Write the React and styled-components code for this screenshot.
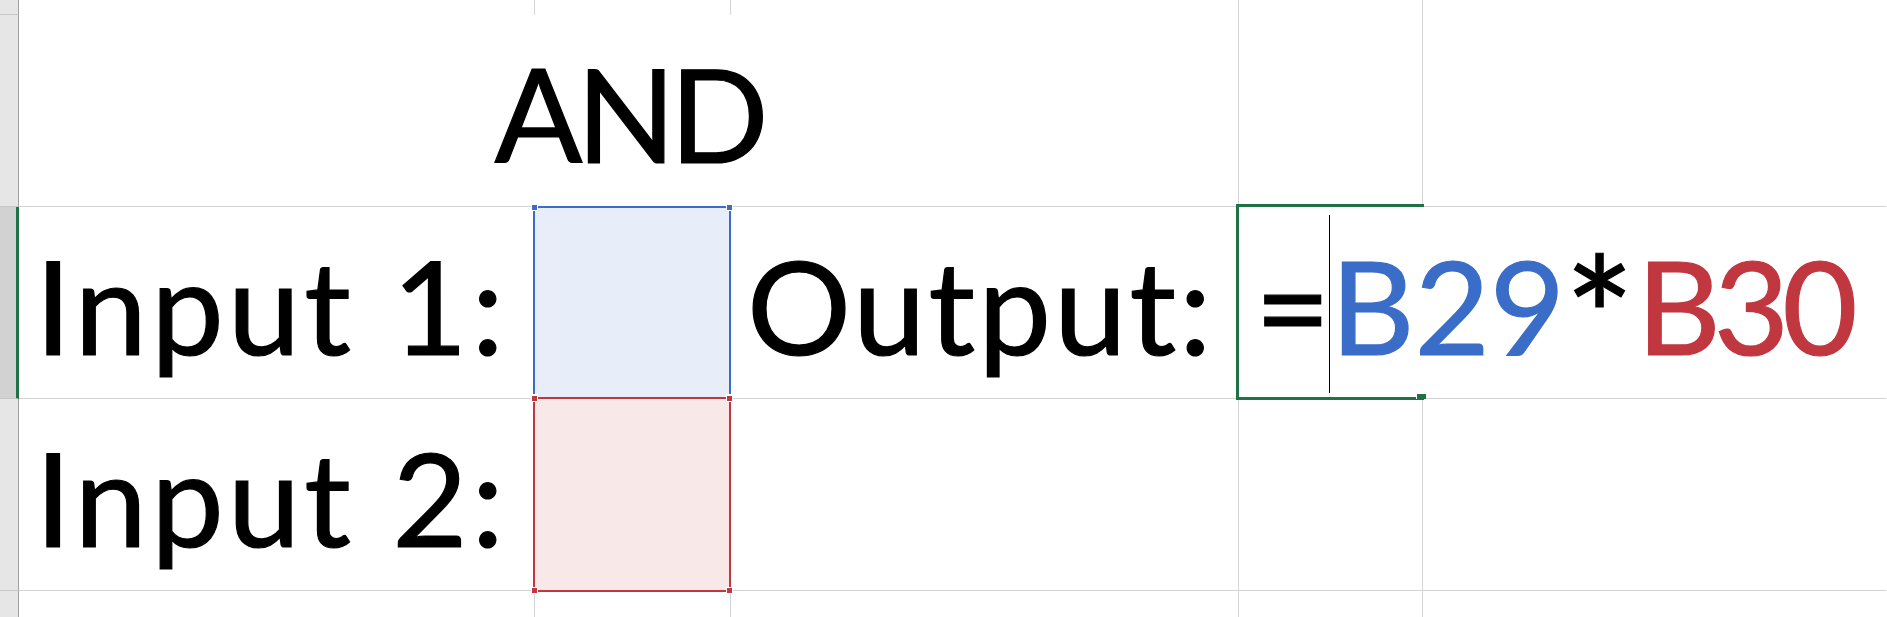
import React from "react";
import styled, { createGlobalStyle, css } from "styled-components";

const C = {
  grid: "#D4D4D4",
  header: "#E6E6E6",
  headerActive: "#D2D2D2",
  headerEdge: "#A0A0A0",
  headerSep: "#C8C8C8",
  green: "#1F7246",
  blue: "#3A6DC8",
  blueFill: "#E8EEF9",
  red: "#C1373F",
  redFill: "#F8E8E8",
};

const GlobalStyle = createGlobalStyle`
  html, body { margin: 0; padding: 0; background: #ffffff; }
  body {
    font-family: Lato, "Noto Sans", "Liberation Sans", sans-serif;
    overflow: hidden;
  }
`;

const Sheet = styled.div`
  display: grid;
  grid-template-columns: 19px 516px 196px 508px 184px 1fr;
  grid-template-rows: 15px repeat(3, 192px) 1fr;
  width: 1887px;
  height: 617px;
  overflow: hidden;
  background: #fff;
`;

const RowHeader = styled.div`
  box-sizing: border-box;
  background: ${(p) => (p.$active ? C.headerActive : C.header)};
  border-right: ${(p) =>
    p.$active ? `3px solid ${C.green}` : `1px solid ${C.headerEdge}`};
  border-bottom: 1px solid ${C.headerSep};
`;

const Cell = styled.div`
  box-sizing: border-box;
  grid-column: span ${(p) => p.$span || 1};
  position: relative;
  display: flex;
  align-items: flex-end;
  justify-content: ${(p) => (p.$center ? "center" : "flex-start")};
  padding: 0 0 28px ${(p) => (p.$center ? 0 : 16)}px;
  min-width: 0;
  background: ${(p) => p.$fill || "#fff"};
  border-right: 1px solid ${(p) => (p.$open || p.$last ? "transparent" : C.grid)};
  border-bottom: 1px solid ${C.grid};
  ${(p) =>
    p.$open &&
    css`
      z-index: 2;
    `}
`;

const Label = styled.span`
  font-size: 130px;
  line-height: 130px;
  white-space: nowrap;
  color: #000;
  letter-spacing: ${(p) => p.$spacing || 0}px;
  -webkit-text-stroke: 1.2px currentColor;
`;

const Ref = styled.span`
  color: ${(p) => p.$color};
  letter-spacing: ${(p) => p.$spacing || 0}px;
`;

const Star = styled.span`
  font-size: 166px;
  line-height: 0;
  vertical-align: -24px;
  margin: 0 2px 0 -1px;
`;

const Caret = styled.span`
  position: relative;
  display: inline-block;
  width: 0;
  height: 0;
  &::after {
    content: "";
    position: absolute;
    left: -1px;
    top: -140px;
    width: 1px;
    height: 178px;
    background: #000;
  }
`;

/* coloured outline drawn around a cell referenced by the formula */
const RefBox = styled.div`
  position: absolute;
  z-index: 3;
  top: ${(p) => p.$top}px;
  bottom: ${(p) => p.$bottom}px;
  left: -2px;
  right: -1px;
  border: 2px solid ${(p) => p.$color};
  pointer-events: none;
`;

const Handle = styled.span`
  position: absolute;
  width: 5px;
  height: 5px;
  background: ${(p) => p.$color};
  border: 1px solid #fff;
  ${(p) => (p.$y === "top" ? "top: -4px;" : "bottom: -4px;")}
  ${(p) => (p.$x === "left" ? "left: -4px;" : "right: -4px;")}
`;

/* green outline of the cell being edited */
const EditFrame = styled.div`
  position: absolute;
  z-index: 1;
  top: -3px;
  left: -3px;
  bottom: -2px;
  width: 188px;
  box-sizing: border-box;
  border: 3px solid ${C.green};
  border-right: none;
  pointer-events: none;
`;

const FillHandle = styled.span`
  position: absolute;
  left: 177px;
  top: 187px;
  width: 9px;
  height: 5px;
  background: ${C.green};
  border-left: 1px solid #fff;
`;

const corners = [
  ["top", "left"],
  ["top", "right"],
  ["bottom", "left"],
  ["bottom", "right"],
];

function Reference({ color, top, bottom }) {
  return (
    <RefBox $color={color} $top={top} $bottom={bottom}>
      {corners.map(([y, x]) => (
        <Handle key={y + x} $color={color} $y={y} $x={x} />
      ))}
    </RefBox>
  );
}

function EmptyRow() {
  return (
    <>
      <RowHeader />
      <Cell />
      <Cell />
      <Cell />
      <Cell />
      <Cell $last />
    </>
  );
}

export default function App() {
  return (
    <>
      <GlobalStyle />
      <Sheet>
        <EmptyRow />

        <RowHeader />
        <Cell $span={3} $center>
          <Label $spacing={-6}>AND</Label>
        </Cell>
        <Cell />
        <Cell $last />

        <RowHeader $active />
        <Cell>
          <Label $spacing={4}>Input 1:</Label>
        </Cell>
        <Cell $fill={C.blueFill}>
          <Reference color={C.blue} top={-1} bottom={-1} />
        </Cell>
        <Cell>
          <Label $spacing={3}>Output:</Label>
        </Cell>
        <Cell $open>
          <EditFrame>
            <FillHandle />
          </EditFrame>
          <Label>
            =<Caret />
            <Ref $color={C.blue}>B29</Ref>
            <Star>*</Star>
            <Ref $color={C.red} $spacing={-7}>
              B30
            </Ref>
          </Label>
        </Cell>
        <Cell $last />

        <RowHeader />
        <Cell>
          <Label $spacing={4}>Input 2:</Label>
        </Cell>
        <Cell $fill={C.redFill}>
          <Reference color={C.red} top={-2} bottom={-2} />
        </Cell>
        <Cell />
        <Cell />
        <Cell $last />

        <EmptyRow />
      </Sheet>
    </>
  );
}
